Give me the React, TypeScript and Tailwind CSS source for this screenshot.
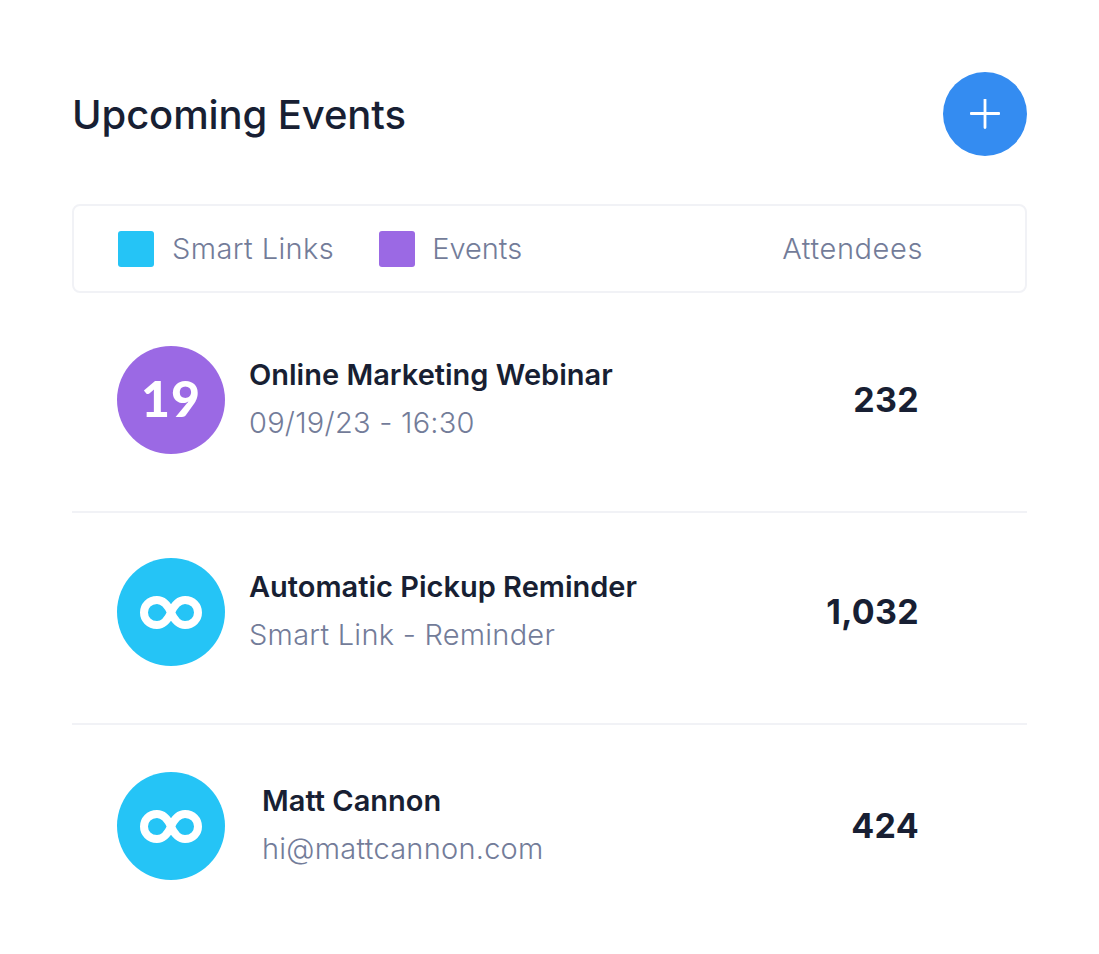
const fontFamily = "font-['Inter',sans-serif]";

function InfinityIcon() {
  return (
    <svg width="62" height="33" viewBox="0 0 62 33" fill="none" aria-hidden="true">
      <path
        d="M31 16.500C27.500 8.500 23.500 4 17 4C9 4 4 10 4 16.500S9 29 17 29C23.500 29 27.500 24.500 31 16.500C34.500 8.500 38.500 4 45 4C53 4 58 10 58 16.500S53 29 45 29C38.500 29 34.500 24.500 31 16.500Z"
        stroke="white"
        strokeWidth="8"
      />
    </svg>
  );
}

interface RowProps {
  badge: React.ReactNode;
  badgeClass: string;
  title: string;
  subtitle: string;
  count: string;
  textClass?: string;
  rowClass: string;
}

function Row({ badge, badgeClass, title, subtitle, count, textClass = "ml-6", rowClass }: RowProps) {
  return (
    <div className={`flex items-center pl-[45px] pr-[108px] ${rowClass}`}>
      <div className={`flex h-[108px] w-[108px] shrink-0 items-center justify-center rounded-full ${badgeClass}`}>
        {badge}
      </div>
      <div className={`mb-[2px] ${textClass}`}>
        <div className="text-[29px] leading-[48px] font-semibold text-[#181f33]">{title}</div>
        <div className="text-[29px] leading-[48px] font-light tracking-[0.25px] text-[#737c99]">{subtitle}</div>
      </div>
      <div className="mb-[2px] ml-auto text-[34px] font-bold tracking-[0.3px] text-[#181f33]">{count}</div>
    </div>
  );
}

export default function App() {
  return (
    <div className={`min-h-[954px] bg-white px-[72px] pt-[72px] ${fontFamily}`}>
      <div className="flex h-[84px] items-center justify-between">
        <h1 className="pt-[2px] text-[40px] font-medium tracking-[-0.1px] text-[#181f33]">Upcoming Events</h1>
        <button className="flex h-[84px] w-[84px] items-center justify-center rounded-full bg-[#348cf1]">
          <svg width="30" height="30" viewBox="0 0 30 30" fill="none" aria-hidden="true">
            <path d="M15 0.500v28M1 14.500h28" stroke="white" strokeWidth="2.800" strokeLinecap="round" />
          </svg>
        </button>
      </div>

      <div className="mt-[48px] flex h-[89px] items-center rounded-lg border-2 border-[#f1f2f6] pl-[44px] pr-[102px] text-[29px] font-light tracking-[0.4px] text-[#737c99]">
        <span className="h-9 w-9 rounded-[3px] bg-[#25c4f6]" />
        <span className="ml-[18px]">Smart Links</span>
        <span className="ml-[45px] h-9 w-9 rounded-[3px] bg-[#9b69e4]" />
        <span className="ml-[17px] tracking-[0px]">Events</span>
        <span className="ml-auto tracking-[0.6px]">Attendees</span>
      </div>

      <Row
        rowClass="h-[220px] pb-[4px] border-b-2 border-[#f1f2f6]"
        badgeClass="bg-[#9b69e4]"
        badge={<span className="mb-[3px] font-['Lato',sans-serif] text-[50px] font-black tracking-[1px] text-white">19</span>}
        title="Online Marketing Webinar"
        subtitle="09/19/23 - 16:30"
        count="232"
      />
      <Row
        rowClass="h-[212px] pb-[12px] border-b-2 border-[#f1f2f6]"
        badgeClass="bg-[#25c4f6]"
        badge={<InfinityIcon />}
        title="Automatic Pickup Reminder"
        subtitle="Smart Link - Reminder"
        count="1,032"
      />
      <Row
        rowClass="h-[202px]"
        badgeClass="bg-[#25c4f6]"
        badge={<InfinityIcon />}
        title="Matt Cannon"
        subtitle="hi@mattcannon.com"
        count="424"
        textClass="ml-[37px]"
      />
    </div>
  );
}
